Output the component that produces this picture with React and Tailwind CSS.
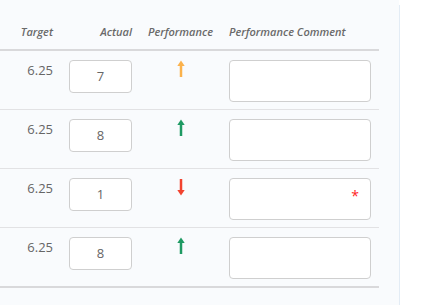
import React from 'react';

const rows = [
  { target: '6.25', actual: '7', perf: 'warn' },
  { target: '6.25', actual: '8', perf: 'up' },
  { target: '6.25', actual: '1', perf: 'down', required: true },
  { target: '6.25', actual: '8', perf: 'up' },
];

function Arrow({ kind }) {
  const color = kind === 'warn' ? '#fbb24c' : kind === 'up' ? '#1f9a63' : '#f2432f';
  if (kind === 'down') {
    return (
      <svg width="10" height="18" viewBox="0 0 10 18">
        <path d="M5 1 V14" stroke={color} strokeWidth="2.5" fill="none" />
        <path d="M1.3 12 L5 17.5 L8.7 12 Z" fill={color} />
      </svg>
    );
  }
  return (
    <svg width="10" height="18" viewBox="0 0 10 18">
      <path d="M5 17 V4" stroke={color} strokeWidth="2.5" fill="none" />
      <path d="M1.3 6 L5 0.5 L8.7 6 Z" fill={color} />
    </svg>
  );
}

export default function App() {
  return (
    <div className="flex w-[429px] h-[305px] bg-white" style={{ fontFamily: '"Open Sans", sans-serif' }}>
      <div className="w-[399px] h-full bg-[#f9fbfd]">
        <div className="w-[379px]">
          <div className="grid grid-cols-[61px_79px_81px_158px] h-[51px] items-end pb-[9px] border-b-2 border-[#d9d9db] text-[11px] italic font-semibold text-[#6a6a6a]">
            <div className="text-right pr-2">Target</div>
            <div className="text-right pr-2">Actual</div>
            <div className="pl-2">Performance</div>
            <div className="pl-2">Performance Comment</div>
          </div>
          {rows.map((r, i) => (
            <div
              key={i}
              className={`grid grid-cols-[61px_79px_81px_158px] pt-[9px] ${
                i === rows.length - 1 ? 'border-b-2 border-[#d9d9db] h-[60px]' : 'h-[59px] border-b border-[#e2e2e4]'
              }`}
            >
              <div className="text-right pr-2 pt-[1px] text-[13px] text-[#666]">{r.target}</div>
              <div className="px-2">
                <div className="h-[33px] bg-white border border-[#cfcfcf] rounded-[4px] flex items-center justify-center pt-[1px] text-[13px] text-[#666]">
                  {r.actual}
                </div>
              </div>
              <div className="pl-2 w-[73px] flex justify-center">
                <Arrow kind={r.perf} />
              </div>
              <div className="px-2">
                <div className="relative h-[42px] bg-white border border-[#cfcfcf] rounded-[4px]">
                  {r.required && (
                    <span className="absolute right-[11px] top-[10px] text-[14px] leading-none text-[#f22]">*</span>
                  )}
                </div>
              </div>
            </div>
          ))}
        </div>
      </div>
      <div className="mt-[5px] w-px bg-[#e3ecf5]" />
    </div>
  );
}
